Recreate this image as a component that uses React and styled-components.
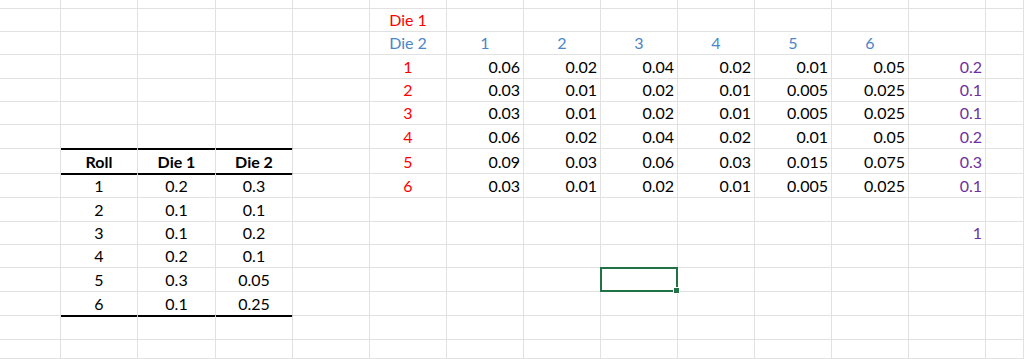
import React from "react";
import styled, { createGlobalStyle } from "styled-components";

/* ── page reset ───────────────────────────────────────────────────────── */
const Global = createGlobalStyle`
  html, body { margin: 0; padding: 0; background: #fff; overflow: hidden; }
`;

const COLS = [61, 77, 78, 77, 77, 77, 77, 77, 77, 77, 77, 77, 77];
const ROWS = [9, 23, 23, 24, 23, 23, 24, 25, 24, 24, 23, 23, 24, 24, 24];

const TONES = {
  black: "#000000",
  red: "#ff0000",
  blue: "#4a86c8",
  purple: "#7030a0",
};

/* ── sheet content ────────────────────────────────────────────────────── */
const cells = {};
const put = (r, c, text, opts = {}) => {
  cells[`${r},${c}`] = { text, tone: "black", align: "right", ...opts };
};

put(1, 5, "Die 1", { tone: "red", align: "center" });
put(2, 5, "Die 2", { tone: "blue", align: "center" });
[1, 2, 3, 4, 5, 6].forEach((n, i) => put(2, 6 + i, String(n), { tone: "blue", align: "center" }));

const joint = [
  ["0.06", "0.02", "0.04", "0.02", "0.01", "0.05", "0.2"],
  ["0.03", "0.01", "0.02", "0.01", "0.005", "0.025", "0.1"],
  ["0.03", "0.01", "0.02", "0.01", "0.005", "0.025", "0.1"],
  ["0.06", "0.02", "0.04", "0.02", "0.01", "0.05", "0.2"],
  ["0.09", "0.03", "0.06", "0.03", "0.015", "0.075", "0.3"],
  ["0.03", "0.01", "0.02", "0.01", "0.005", "0.025", "0.1"],
];
joint.forEach((row, i) => {
  put(3 + i, 5, String(i + 1), { tone: "red", align: "center" });
  row.forEach((v, j) => put(3 + i, 6 + j, v, { tone: j === 6 ? "purple" : "black" }));
});
put(10, 12, "1", { tone: "purple" });

["Roll", "Die 1", "Die 2"].forEach((h, j) => put(7, 1 + j, h, { align: "center", bold: true }));
const rolls = [
  ["0.2", "0.3"],
  ["0.1", "0.1"],
  ["0.1", "0.2"],
  ["0.2", "0.1"],
  ["0.3", "0.05"],
  ["0.1", "0.25"],
];
rolls.forEach(([a, b], i) => {
  put(8 + i, 1, String(i + 1), { align: "center" });
  put(8 + i, 2, a, { align: "center" });
  put(8 + i, 3, b, { align: "center" });
});

const thickUnder = (r, c) => c >= 1 && c <= 3 && (r === 6 || r === 7 || r === 13);
const SELECTED = "12,8";

/* ── styled parts ─────────────────────────────────────────────────────── */
const Sheet = styled.div`
  width: 1024px;
  height: 359px;
  display: grid;
  grid-template-columns: ${COLS.map((w) => `${w}px`).join(" ")} 1fr;
  grid-template-rows: ${ROWS.map((h) => `${h}px`).join(" ")} 1fr;
  font-family: Lato, "Open Sans", "Liberation Sans", sans-serif;
  font-size: 16px;
  background: #fff;
  overflow: hidden;
`;

const Cell = styled.div`
  position: relative;
  box-sizing: border-box;
  display: flex;
  align-items: flex-end;
  justify-content: ${(p) => (p.$align === "center" ? "center" : "flex-end")};
  padding: 0 3px 3px 3px;
  border-right: 1px solid #e1e1e1;
  border-bottom: ${(p) => (p.$thick ? "2px solid #000" : "1px solid #e1e1e1")};
  margin-bottom: ${(p) => (p.$thick ? "-1px" : "0")};
  color: ${(p) => TONES[p.$tone] || "#000"};
  font-weight: ${(p) => (p.$bold ? 700 : 400)};
  white-space: nowrap;
  line-height: 1;
`;

const Selection = styled.div`
  position: absolute;
  left: -1px;
  top: -1px;
  right: -1px;
  bottom: -1px;
  border: 2px solid #217346;
  pointer-events: none;
  z-index: 2;
`;

const FillHandle = styled.span`
  position: absolute;
  right: -4px;
  bottom: -4px;
  width: 5px;
  height: 5px;
  background: #217346;
  border: 1px solid #fff;
`;

export default function App() {
  const rowCount = ROWS.length + 1;
  const colCount = COLS.length + 1;
  const out = [];
  for (let r = 0; r < rowCount; r++) {
    for (let c = 0; c < colCount; c++) {
      const key = `${r},${c}`;
      const cell = cells[key];
      out.push(
        <Cell
          key={key}
          $align={cell?.align}
          $tone={cell?.tone}
          $bold={cell?.bold}
          $thick={thickUnder(r, c)}
        >
          {cell?.text}
          {key === SELECTED && (
            <Selection>
              <FillHandle />
            </Selection>
          )}
        </Cell>
      );
    }
  }
  return (
    <>
      <Global />
      <Sheet>{out}</Sheet>
    </>
  );
}
